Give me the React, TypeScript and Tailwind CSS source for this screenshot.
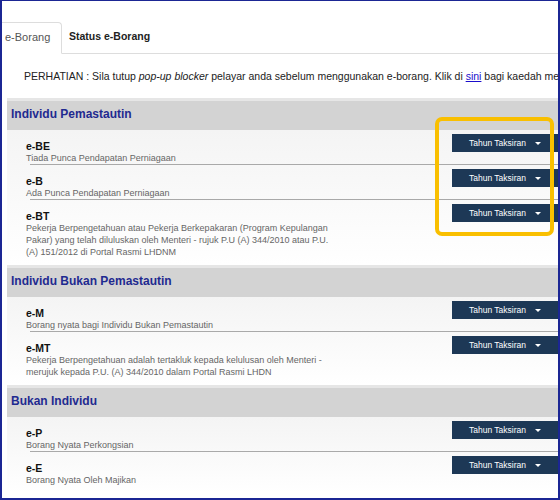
import React from "react";

type Row = { code: string; desc: string[] };
type Section = { title: string; rows: Row[] };

const sections: Section[] = [
  {
    title: "Individu Pemastautin",
    rows: [
      { code: "e-BE", desc: ["Tiada Punca Pendapatan Perniagaan"] },
      { code: "e-B", desc: ["Ada Punca Pendapatan Perniagaan"] },
      {
        code: "e-BT",
        desc: [
          "Pekerja Berpengetahuan atau Pekerja Berkepakaran (Program Kepulangan",
          "Pakar) yang telah diluluskan oleh Menteri - rujuk P.U (A) 344/2010 atau P.U.",
          "(A) 151/2012 di Portal Rasmi LHDNM",
        ],
      },
    ],
  },
  {
    title: "Individu Bukan Pemastautin",
    rows: [
      { code: "e-M", desc: ["Borang nyata bagi Individu Bukan Pemastautin"] },
      {
        code: "e-MT",
        desc: [
          "Pekerja Berpengetahuan adalah tertakluk kepada kelulusan oleh Menteri -",
          "merujuk kepada P.U. (A) 344/2010 dalam Portal Rasmi LHDN",
        ],
      },
    ],
  },
  {
    title: "Bukan Individu",
    rows: [
      { code: "e-P", desc: ["Borang Nyata Perkongsian"] },
      { code: "e-E", desc: ["Borang Nyata Oleh Majikan"] },
    ],
  },
];

function TahunButton() {
  return (
    <button className="mt-[4px] flex h-[18px] w-[106px] shrink-0 items-center bg-[#1d3856] pl-[17px] text-[8.5px] leading-none text-white">
      Tahun Taksiran
      <span className="ml-[9px] h-0 w-0 border-l-[3px] border-r-[3px] border-t-[3px] border-l-transparent border-r-transparent border-t-white" />
    </button>
  );
}

export default function App() {
  return (
    <div className="relative h-[500px] w-[560px] overflow-hidden border-b-2 border-l-2 border-r-2 border-t border-[#1b2694] bg-white font-['Liberation_Sans',Arial,sans-serif]">
      <div className="h-[21px]" />

      {/* tabs */}
      <div className="flex h-[32px] border-b border-[#dddddd]">
        <div className="-mb-px -ml-[12px] flex h-[32px] w-[72px] items-center rounded-tr-[4px] border border-[#dddddd] border-b-white bg-white pb-[2px] pl-[14px] text-[11px] text-[#555]">
          e-Borang
        </div>
        <div className="ml-[7px] flex items-center pb-[2px] text-[10.5px] font-bold text-[#222]">
          Status e-Borang
        </div>
      </div>

      <div className="whitespace-nowrap pb-[15px] pl-[22px] pt-[15px] text-[10.5px] leading-[14px] text-[#222]">
        PERHATIAN : Sila tutup <i>pop-up blocker</i> pelayar anda sebelum menggunakan e-borang. Klik di{" "}
        <a className="text-[#1a0dcc] underline">sini</a> bagi kaedah menutup pop-up blocker.
      </div>

      <div className="ml-[5px]">
        {sections.map((s) => (
          <div key={s.title}>
            <div className="h-[3px] bg-[#e6e6e6]" />
            <div className="flex h-[29px] items-center bg-[#d3d3d3] pb-[3px] pl-[4px] text-[12px] font-bold text-[#1f2a90]">
              {s.title}
            </div>
            <div className="bg-gradient-to-b from-[#f4f4f4] to-white pb-[7px]">
              {s.rows.map((r, i) => (
                <div key={r.code}>
                  <div className="flex items-start pl-[19px]">
                    <div className="flex-1 whitespace-nowrap pt-[10px]">
                      <div className="text-[10.5px] font-bold leading-[12px] text-[#111]">{r.code}</div>
                      {r.desc.map((l) => (
                        <div key={l} className="text-[9px] leading-[12px] text-[#666]">
                          {l}
                        </div>
                      ))}
                    </div>
                    <TahunButton />
                  </div>
                  {i < s.rows.length - 1 && <div className="ml-[23px] h-px bg-[#a9a9a9]" />}
                </div>
              ))}
            </div>
          </div>
        ))}
      </div>

      {/* highlight */}
      <div className="pointer-events-none absolute left-[433px] top-[116px] h-[119px] w-[119px] rounded-[7px] border-4 border-[#f9bf00]" />
    </div>
  );
}
